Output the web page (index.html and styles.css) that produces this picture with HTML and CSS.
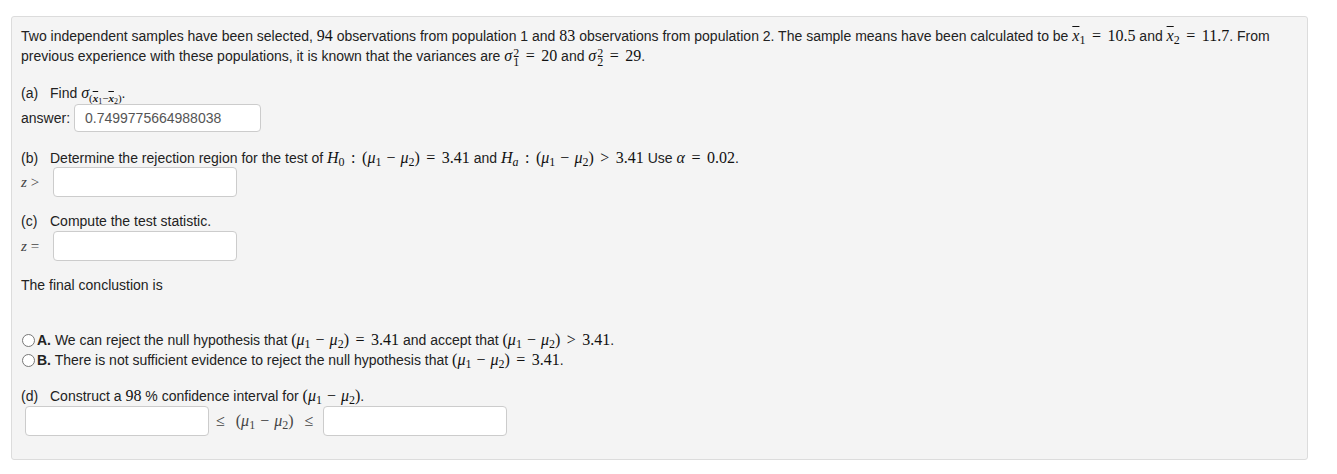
FILE: index.html
```html
<!DOCTYPE html>
<html>
<head>
<meta charset="utf-8">
<link rel="stylesheet" href="styles.css">
</head>
<body>
<div class="box">
  <p class="intro">Two independent samples have been selected, <span class="m">94</span> observations from population 1 and <span class="m">83</span> observations from population 2. The sample means have been calculated to be <span class="m"><i class="ov">x</i><sub>1</sub><span class="rel">=</span>10.5</span> and <span class="m"><i class="ov">x</i><sub>2</sub><span class="rel">=</span>11.7</span>. From previous experience with these populations, it is known that the variances are <span class="m"><i>σ</i><span class="ss"><span>2</span><span>1</span></span><span class="rel">=</span>20</span> and <span class="m"><i>σ</i><span class="ss"><span>2</span><span>2</span></span><span class="rel">=</span>29</span>.</p>

  <p class="q qa"><span class="lbl">(a)</span>Find <span class="m"><i>σ</i><sub class="small">(<i class="ov">x</i><sub>1</sub>−<i class="ov">x</i><sub>2</sub>)</sub></span>.</p>
  <div class="row first">
    <span class="rlabel">answer:</span>
    <span class="inp w187 h28">0.7499775664988038</span>
  </div>

  <p class="q qb"><span class="lbl">(b)</span>Determine the rejection region for the test of <span class="m"><i>H</i><sub>0</sub><span class="rel">:</span>(<i>μ</i><sub>1</sub><span class="bin">−</span><i>μ</i><sub>2</sub>)<span class="rel">=</span>3.41</span> and <span class="m"><i>H</i><sub><i>a</i></sub><span class="rel">:</span>(<i>μ</i><sub>1</sub><span class="bin">−</span><i>μ</i><sub>2</sub>)<span class="rel">&gt;</span>3.41</span> Use <span class="m"><i>α</i><span class="rel">=</span>0.02</span>.</p>
  <div class="row tight">
    <span class="m zlab"><i>z</i><span class="rel">&gt;</span></span>
    <span class="inp w184"></span>
  </div>

  <p class="q qc"><span class="lbl">(c)</span>Compute the test statistic.</p>
  <div class="row">
    <span class="m zlab"><i>z</i><span class="rel">=</span></span>
    <span class="inp w184"></span>
  </div>

  <p class="q qf">The final conclustion is</p>

  <div class="choices">
    <div class="choice"><span class="radio"></span><span class="ctext"><b>A.</b> We can reject the null hypothesis that <span class="m">(<i>μ</i><sub>1</sub><span class="bin">−</span><i>μ</i><sub>2</sub>)<span class="rel">=</span>3.41</span> and accept that <span class="m">(<i>μ</i><sub>1</sub><span class="bin">−</span><i>μ</i><sub>2</sub>)<span class="rel">&gt;</span>3.41</span>.</span></div>
    <div class="choice"><span class="radio"></span><span class="ctext"><b>B.</b> There is not sufficient evidence to reject the null hypothesis that <span class="m">(<i>μ</i><sub>1</sub><span class="bin">−</span><i>μ</i><sub>2</sub>)<span class="rel">=</span>3.41</span>.</span></div>
  </div>

  <p class="q qd"><span class="lbl">(d)</span>Construct a <span class="m">98</span> % confidence interval for <span class="m">(<i>μ</i><sub>1</sub><span class="bin">−</span><i>μ</i><sub>2</sub>)</span>.</p>
  <div class="row ci">
    <span class="inp w184"></span>
    <span class="m cimid">≤<span class="sp"></span>(<i>μ</i><sub>1</sub><span class="bin">−</span><i>μ</i><sub>2</sub>)<span class="sp"></span>≤</span>
    <span class="inp w184"></span>
  </div>
</div>
</body>
</html>
```

FILE: styles.css
```css
html, body {
  margin: 0;
  padding: 0;
  background: #ffffff;
}
body {
  font-family: "Liberation Sans", Arial, sans-serif;
  font-size: 14px;
  color: #222;
}
.box {
  margin: 16px 29px 0 11px;
  background: #f4f4f4;
  border: 1px solid #dcdcdc;
  border-radius: 3px;
  padding: 9px 10px 22px 9px;
  height: 411px;
  box-sizing: content-box;
}
p {
  margin: 0;
  line-height: 20px;
}
.intro {
  width: 1272px;
}
.m {
  font-family: "Liberation Serif", "Times New Roman", serif;
  font-size: 16px;
  line-height: 1;
  color: #111;
  white-space: nowrap;
}
.m i {
  font-style: italic;
}
.m sub, .m sup {
  font-size: 12px;
  line-height: 0;
}
.m sub {
  vertical-align: -3px;
}
.rel {
  margin: 0 6.5px;
}
.bin {
  margin: 0 5px;
}
.sp {
  display: inline-block;
  width: 11px;
}
.ss {
  display: inline-block;
  vertical-align: -5px;
  line-height: 9px;
  font-size: 12px;
  margin-left: 1px;
}
.ss span {
  display: block;
  line-height: 9px;
}
.ov {
  text-decoration: overline;
}
.m sub.small {
  font-size: 11px;
  vertical-align: -4px;
}
.small sub {
  font-size: 8px;
  vertical-align: -2px;
}
.small .ov {
  font-weight: bold;
}
.lbl {
  display: inline-block;
  width: 29px;
}
.qa { margin-top: 16px; }
.qb { margin-top: 16px; }
.qc { margin-top: 14px; }
.qf { margin-top: 14px; }
.qd { margin-top: 16px; }
.row {
  display: flex;
  align-items: center;
  margin-top: 0;
}
.row.tight {
  margin-top: -1px;
}
.row.first {
  margin-top: 1px;
}
.rlabel {
  width: 53px;
}
.zlab {
  width: 32px;
  font-size: 15px;
  color: #444;
}
.zlab .rel {
  margin: 0 4px;
}
.inp {
  display: inline-flex;
  align-items: center;
  box-sizing: border-box;
  height: 30px;
  background: #fff;
  border: 1px solid #cccccc;
  border-radius: 4px;
  padding: 0 10px;
  color: #555;
  font-size: 14px;
}
.h28 { height: 28px; }
.w187 { width: 187px; }
.w184 { width: 184px; }
.choices {
  margin-top: 35px;
}
.choice {
  display: flex;
  align-items: center;
  line-height: 20px;
  height: 20px;
  white-space: nowrap;
}
.radio {
  display: inline-block;
  width: 11px;
  height: 11px;
  border: 1px solid #777;
  border-radius: 50%;
  background: #fff;
  margin-right: 2px;
  margin-left: 1px;
}
.ci {
  padding-left: 4px;
}
.cimid {
  margin: 0 10px 0 7px;
  color: #444;
}
```
